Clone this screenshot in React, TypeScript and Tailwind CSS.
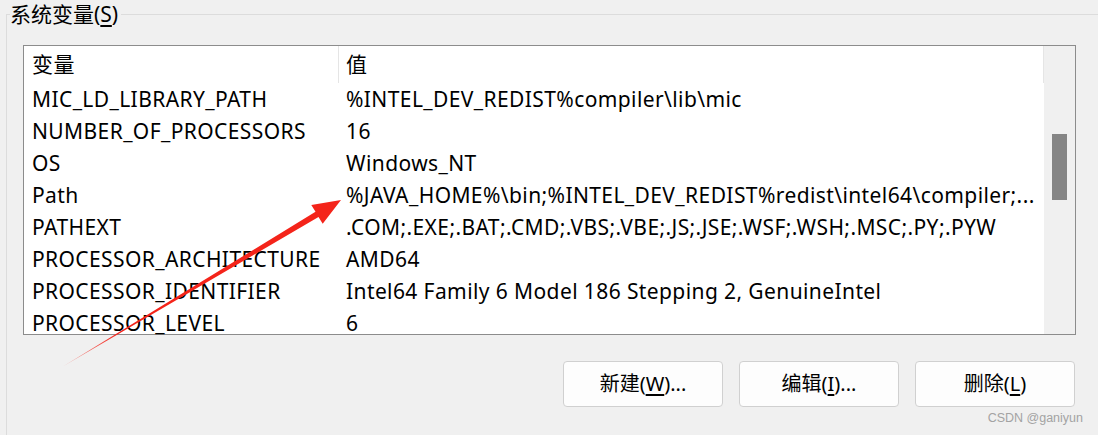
const rows: [string, string][] = [
  ["MIC_LD_LIBRARY_PATH", "%INTEL_DEV_REDIST%compiler\\lib\\mic"],
  ["NUMBER_OF_PROCESSORS", "16"],
  ["OS", "Windows_NT"],
  ["Path", "%JAVA_HOME%\\bin;%INTEL_DEV_REDIST%redist\\intel64\\compiler;..."],
  ["PATHEXT", ".COM;.EXE;.BAT;.CMD;.VBS;.VBE;.JS;.JSE;.WSF;.WSH;.MSC;.PY;.PYW"],
  ["PROCESSOR_ARCHITECTURE", "AMD64"],
  ["PROCESSOR_IDENTIFIER", "Intel64 Family 6 Model 186 Stepping 2, GenuineIntel"],
  ["PROCESSOR_LEVEL", "6"],
]

function Btn({ label, hot, tail }: { label: string; hot: string; tail: string }) {
  return (
    <button className="flex h-[46px] w-[160px] items-center justify-center rounded-[4px] border border-[#d0d0d0] bg-[#fdfdfd] text-[20px] text-black">
      {label}(<span className="underline underline-offset-[3px]">{hot}</span>){tail}
    </button>
  )
}

export default function App() {
  return (
    <div className="relative h-[435px] w-[1098px] overflow-hidden bg-[#f0f0f0] font-['Noto_Sans','Noto_Sans_CJK_SC',sans-serif] text-black">
      {/* group box header */}
      <div className="flex h-[28px] items-center pl-[6px]">
        <div className="h-[14px] w-[4px] self-end border-l border-t border-[#dcdcdc]" />
        <span className="text-[21px] leading-[28px]">
          系统变量(<span className="underline underline-offset-[3px]">S</span>)
        </span>
        <div className="ml-[3px] h-px flex-1 bg-[#dcdcdc]" />
      </div>

      <div className="ml-[6px] h-[407px] border-l border-[#dcdcdc] pl-[16px] pt-[17px]">
        {/* list view */}
        <div className="flex h-[290px] w-[1053px] border border-[#8c8c8c] bg-white">
          <div className="flex-1 text-[21px] tracking-[0.4px]">
            <div className="flex h-[37px] items-center">
              <div className="w-[315px] border-r border-[#e5e5e5] pl-[8px] leading-[37px]">变量</div>
              <div className="flex-1 border-r border-[#e5e5e5] pl-[7px] leading-[37px]">值</div>
            </div>
            {rows.map(([k, v]) => (
              <div key={k} className="flex h-[32px] items-center whitespace-nowrap leading-[20px]">
                <div className="w-[315px] pl-[8px]">{k}</div>
                <div className="flex-1 pl-[7px]">{v}</div>
              </div>
            ))}
          </div>
          <div className="w-[31px] bg-[#f0f0f0] pl-[8px] pt-[88px]">
            <div className="h-[66px] w-[15px] bg-[#858585]" />
          </div>
        </div>

        <div className="mt-[26px] flex w-[1053px] justify-end gap-4 pr-[1px]">
          <Btn label="新建" hot="W" tail="..." />
          <Btn label="编辑" hot="I" tail="..." />
          <Btn label="删除" hot="L" tail="" />
        </div>
        <div className="mt-[3px] flex w-[1060px] justify-end font-['Liberation_Sans',sans-serif] text-[12.5px] leading-[16px] text-[#a3a3a3]">
          CSDN @ganiyun
        </div>
      </div>

      {/* red annotation arrow */}
      <svg className="pointer-events-none absolute left-0 top-0" width="1098" height="435">
        <defs>
          <linearGradient id="fade" x1="62" y1="367" x2="341" y2="200" gradientUnits="userSpaceOnUse">
            <stop offset="0" stopColor="#f4241a" stopOpacity="0.3" />
            <stop offset="0.2" stopColor="#f4241a" stopOpacity="1" />
            <stop offset="1" stopColor="#f4241a" stopOpacity="1" />
          </linearGradient>
        </defs>
        <polygon
          points="62,367 315.5,211.8 311.3,205 341,200 322.7,223.8 318.5,217"
          fill="url(#fade)"
        />
      </svg>
    </div>
  )
}
